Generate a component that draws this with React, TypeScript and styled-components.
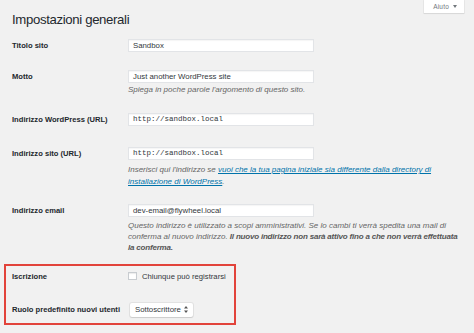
import styled, { createGlobalStyle } from 'styled-components'

const GlobalStyle = createGlobalStyle`
  html, body {
    margin: 0;
    padding: 0;
    background: #f1f1f1;
  }
  body {
    font-family: "Liberation Sans", Arial, sans-serif;
    color: #23282d;
  }
`

const Page = styled.div`
  width: 474px;
  height: 333px;
  overflow: hidden;
  background: #f1f1f1;
`

const MetaBar = styled.div`
  display: flex;
  justify-content: flex-end;
  padding-right: 10px;
`

const HelpTab = styled.div`
  display: flex;
  align-items: center;
  gap: 4px;
  height: 13px;
  padding: 0 7px 0 9px;
  background: #fff;
  box-shadow: 0 0 0 1px rgba(0, 0, 0, 0.04), 0 1px 1px rgba(0, 0, 0, 0.06);
  font-size: 6.5px;
  letter-spacing: 0.2px;
  color: #72777c;
`

const Caret = styled.span`
  width: 0;
  height: 0;
  border-left: 2px solid transparent;
  border-right: 2px solid transparent;
  border-top: 3px solid #72777c;
`

const Title = styled.h1`
  margin: 0;
  padding: 0 12px;
  height: 17px;
  font-size: 13.2px;
  letter-spacing: -0.35px;
  line-height: 14px;
  font-weight: 400;
  color: #23282d;
`

const Rows = styled.div`
  display: flex;
  flex-direction: column;
`

const Row = styled.div<{ $pt?: number; $pb?: number }>`
  display: grid;
  grid-template-columns: 116px 1fr;
  align-items: start;
  padding: ${(p) => p.$pt ?? 9}px 0 ${(p) => p.$pb ?? 9}px 12px;
`

const Label = styled.div`
  font-size: 7.6px;
  font-weight: 700;
  line-height: 13px;
  color: #23282d;
  white-space: nowrap;
`

const Field = styled.div`
  display: flex;
  flex-direction: column;
  align-items: flex-start;
`

const TextInput = styled.div<{ $mono?: boolean }>`
  box-sizing: border-box;
  width: 186px;
  height: 13px;
  padding: 0 4px;
  background: #fff;
  border: 1px solid #e2e4e7;
  box-shadow: inset 0 1px 1px rgba(0, 0, 0, 0.04);
  font-family: ${(p) => (p.$mono ? '"Liberation Mono", monospace' : '"Liberation Sans", Arial, sans-serif')};
  font-size: ${(p) => (p.$mono ? '7.5px' : '7.8px')};
  line-height: 11px;
  color: #32373c;
  white-space: nowrap;
`

const Description = styled.p<{ $mt?: number; $lh?: number }>`
  margin: ${(p) => p.$mt ?? 1}px 0 0;
  font-size: 8px;
  line-height: ${(p) => p.$lh ?? 11}px;
  font-style: italic;
  color: #666;
  white-space: nowrap;

  b {
    color: #555;
    letter-spacing: -0.2px;
  }
`

const DocLink = styled.a`
  color: #0073aa;
  text-decoration: underline;
`

const Highlight = styled.div`
  margin: 0 238px 0 4px;
  border: 2px solid #e2433b;
  padding: 0 0 0 6px;
  display: flex;
  flex-direction: column;
`

const HighlightRow = styled(Row)`
  padding-left: 0;
`

const CheckLabel = styled.label`
  display: flex;
  align-items: center;
  gap: 5px;
  height: 13px;
  font-size: 7.7px;
  color: #32373c;
`

const CheckBox = styled.span`
  box-sizing: border-box;
  width: 9px;
  height: 8px;
  background: #fff;
  border: 1px solid #c8ccd0;
  box-shadow: inset 0 1px 1px rgba(0, 0, 0, 0.08);
`

const Select = styled.div`
  box-sizing: border-box;
  display: flex;
  align-items: center;
  justify-content: space-between;
  width: 63px;
  height: 14px;
  margin-left: 2px;
  padding: 0 5px;
  background: #fff;
  border-radius: 2px;
  box-shadow: 0 0 0 1px rgba(0, 0, 0, 0.06), 0 1px 1px rgba(0, 0, 0, 0.1);
  font-size: 7.8px;
  color: #32373c;
`

const SelectLabel = styled(Label)`
  line-height: 14px;
`

function UpDown() {
  return (
    <svg width="4" height="7" viewBox="0 0 4 7">
      <path d="M2 0 L4 2.6 H0 Z M2 7 L4 4.4 H0 Z" fill="#555" />
    </svg>
  )
}

export default function App() {
  return (
    <Page>
      <GlobalStyle />
      <MetaBar>
        <HelpTab>
          Aiuto <Caret />
        </HelpTab>
      </MetaBar>
      <Title>Impostazioni generali</Title>
      <Rows>
        <Row>
          <Label>Titolo sito</Label>
          <Field>
            <TextInput>Sandbox</TextInput>
          </Field>
        </Row>
        <Row>
          <Label>Motto</Label>
          <Field>
            <TextInput>Just another WordPress site</TextInput>
            <Description>Spiega in poche parole l'argomento di questo sito.</Description>
          </Field>
        </Row>
        <Row $pb={12}>
          <Label>Indirizzo WordPress (URL)</Label>
          <Field>
            <TextInput $mono>http://sandbox.local</TextInput>
          </Field>
        </Row>
        <Row $pb={8}>
          <Label>Indirizzo sito (URL)</Label>
          <Field>
            <TextInput $mono>http://sandbox.local</TextInput>
            <Description $mt={4} $lh={12}>
              Inserisci qui l'indirizzo se{' '}
              <DocLink href="#">vuoi che la tua pagina iniziale sia differente dalla directory di</DocLink>
              <br />
              <DocLink href="#">installazione di WordPress</DocLink>.
            </Description>
          </Field>
        </Row>
        <Row $pt={8} $pb={10.6}>
          <Label>Indirizzo email</Label>
          <Field>
            <TextInput>dev-email@flywheel.local</TextInput>
            <Description $mt={4} $lh={10.8}>
              Questo indirizzo è utilizzato a scopi amministrativi. Se lo cambi ti verrà spedita una mail di
              <br />
              conferma al nuovo indirizzo. <b>Il nuovo indirizzo non sarà attivo fino a che non verrà effettuata</b>
              <br />
              <b>la conferma.</b>
            </Description>
          </Field>
        </Row>
        <Highlight>
          <HighlightRow $pt={4} $pb={10}>
            <Label>Iscrizione</Label>
            <CheckLabel>
              <CheckBox />
              Chiunque può registrarsi
            </CheckLabel>
          </HighlightRow>
          <HighlightRow $pt={10} $pb={6}>
            <SelectLabel>Ruolo predefinito nuovi utenti</SelectLabel>
            <Select>
              Sottoscrittore <UpDown />
            </Select>
          </HighlightRow>
        </Highlight>
      </Rows>
    </Page>
  )
}
